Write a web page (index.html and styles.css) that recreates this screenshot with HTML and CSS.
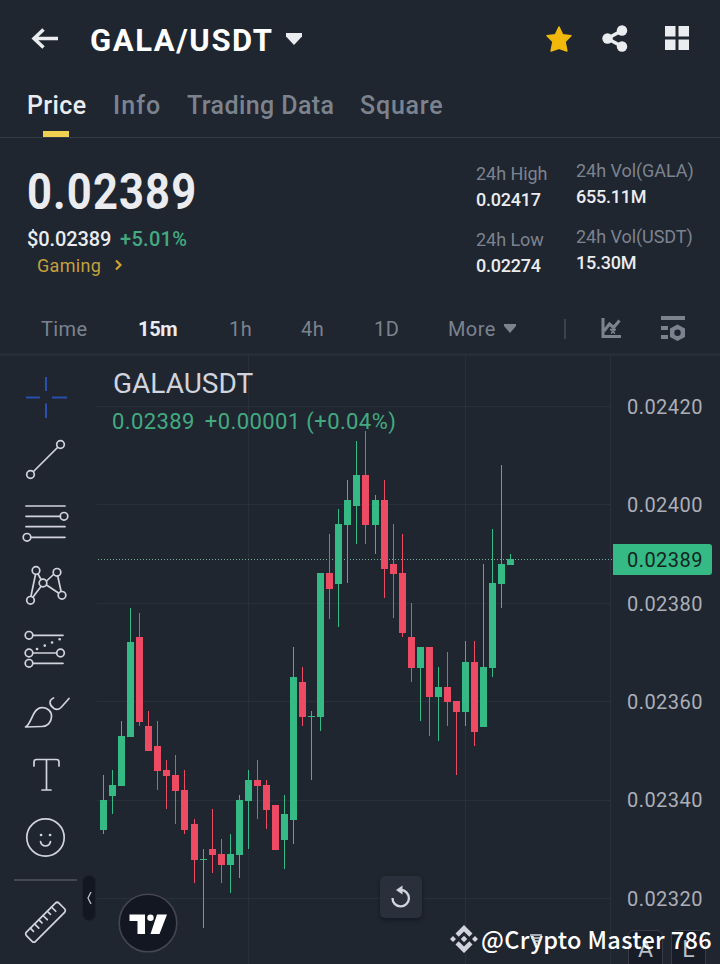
FILE: index.html
```html
<!DOCTYPE html>
<html lang="en">
<head>
<meta charset="utf-8">
<title>GALA/USDT</title>
<link rel="stylesheet" href="styles.css">
</head>
<body>
<div class="app">
  <header class="header">
    <svg class="back" width="30" height="24" viewBox="0 0 30 24"><path d="M28 11.500H4M13.500 2.500L4 11.500l9.500 9"/></svg>
    <h1 class="pair">GALA/USDT</h1>
    <svg class="caret" width="18" height="14" viewBox="0 0 18 14"><path d="M1 1h16v3.500L9 13 1 4.500z"/></svg>
    <div class="actions">
      <svg class="star" width="30" height="30" viewBox="0 0 30 30"><path d="M15 3l3.700 7.700 8.300 1.100-6 5.800 1.900 9.400L15 24.200 7.100 27 9 17.600 3 11.800l8.300-1.100z"/></svg>
      <svg class="share" width="30" height="30" viewBox="0 0 30 30"><path d="M22 6.500L7.500 14.500 22 22.500"/><circle cx="22" cy="6.500" r="5.200"/><circle cx="7.500" cy="14.500" r="5.200"/><circle cx="22" cy="22.500" r="5.200"/></svg>
      <svg class="grid-icon" width="24" height="24" viewBox="0 0 24 24"><path d="M0 0h10.500v10.500H0zM13.500 0H24v10.500H13.500zM0 13.500h10.500V24H0zM13.500 13.500H24V24H13.500z"/></svg>
    </div>
  </header>

  <nav class="tabs">
    <span class="tab tab-price active">Price</span>
    <span class="tab tab-info">Info</span>
    <span class="tab tab-data">Trading Data</span>
    <span class="tab tab-square">Square</span>
  </nav>

  <section class="summary">
    <div class="quote">
      <div class="last"><span>0.02389</span></div>
      <div class="fiat"><span class="usd">$0.02389</span><span class="change">+5.01%</span></div>
      <div class="tag">Gaming <svg width="9" height="12" viewBox="0 0 9 12"><path d="M2 1.500L6.500 6 2 10.500"/></svg></div>
    </div>
    <div class="stats stats-price">
      <div class="label">24h High</div><div class="value">0.02417</div>
      <div class="label">24h Low</div><div class="value">0.02274</div>
    </div>
    <div class="stats stats-volume">
      <div class="label">24h Vol(GALA)</div><div class="value">655.11M</div>
      <div class="label">24h Vol(USDT)</div><div class="value">15.30M</div>
    </div>
  </section>

  <nav class="intervals">
    <span>Time</span><span class="active">15m</span><span>1h</span><span>4h</span><span>1D</span>
    <span class="more">More<svg width="12" height="9" viewBox="0 0 12 9"><path d="M0 0h12v2L6 9 0 2z"/></svg></span>
    <i class="separator"></i>
    <svg class="indicator" width="22" height="22" viewBox="0 0 22 22"><path d="M2 1v18.500h18M3 14l5.500-7 4 3.500 6-7"/><path class="thin" d="M9 12.500h6M10 13l4 3.500M14 13l-4 3.500"/></svg>
    <svg class="settings" width="26" height="27" viewBox="0 0 26 27"><path d="M1 1h24v4H1zM1 11h7v4H1zM1 20h7v4H1z"/><path fill-rule="evenodd" d="M17.500 9.500l7.500 4v8.500l-7.500 4-7.500-4v-8.500zM17.500 14.500a3.200 3.200 0 1 0 0 6.400 3.200 3.200 0 0 0 0-6.400z"/></svg>
  </nav>

  <main class="chart">
    <aside class="tools">
      <svg class="tool cross" viewBox="0 0 60 63"><path d="M31 11v14M31 37.500v14.500M11 31.500h14M37 31.500h15"/></svg>
      <svg class="tool" viewBox="0 0 60 63"><path d="M18.500 42.500l24-24"/><circle cx="45.500" cy="15.500" r="3.800"/><circle cx="15.500" cy="45.500" r="3.800"/></svg>
      <svg class="tool" viewBox="0 0 60 63"><path d="M11 14h39M11 24.300h34.500M11 34.700h39M16 45.300h34"/><circle cx="49" cy="24.300" r="3.800"/><circle cx="12" cy="45.300" r="3.800"/></svg>
      <svg class="tool" viewBox="0 0 60 63"><path d="M20.500 19.500L16 41M23 19l3 5.500M31.500 26l7-6.500M42.700 21L46 36M43.500 38L31.500 30M26 31.500L18 42"/><circle cx="21" cy="15.500" r="3.800"/><circle cx="42" cy="17.300" r="3.800"/><circle cx="28" cy="28" r="3.800"/><circle cx="15.500" cy="45.300" r="3.800"/><circle cx="47" cy="40.300" r="3.800"/></svg>
      <svg class="tool" viewBox="0 0 60 63"><path d="M18 17.300h30M18 35h23.500M18 45.300h30"/><circle cx="14" cy="17.300" r="3.800"/><circle cx="14" cy="35" r="3.800"/><circle cx="45.500" cy="35" r="3.800"/><circle cx="14" cy="45.300" r="3.800"/><path class="dots" d="M22 31h.1M29.700 27.600h.1M37 24.500h.1M44.600 21.200h.1"/></svg>
      <svg class="tool" viewBox="0 0 60 63"><path d="M10.500 46C17 43 17 27 27 26.500 33 26.500 37 31 36.500 36 36.300 41.500 32 45.500 27 45.500zM38.500 17C33.500 19.500 34 24 39 27.500 42 29.500 44.500 28 46 26.500L54 17.500"/></svg>
      <svg class="tool" viewBox="0 0 60 63"><path d="M19 22v-4q0-2.500 2.500-2.500h20q2.500 0 2.500 2.500v4M31.500 15.500v30.500M27 46h9"/></svg>
      <svg class="tool" viewBox="0 0 60 63"><circle cx="30.500" cy="30.500" r="18.700"/><path d="M25.500 34.500q1 4.500 5 4.500t5-4.500"/><path class="dots" d="M26 28h.1M35 28h.1"/></svg>
      <i class="divider"></i>
      <svg class="tool" viewBox="0 0 60 63"><g transform="translate(30.500 32.200) rotate(-45)"><rect x="-23" y="-6.500" width="46" height="13" rx="2.500"/><path d="M-15-6.500v4.500M-9-6.500v6M-3-6.500v4.500M3-6.500v6M9-6.500v4.500M15-6.500v6"/></g></svg>
    </aside>

    <div class="plot">
      <svg class="candles" width="516" height="608" viewBox="97 356 516 608">
        <path class="gridline" d="M97 406.500H611M97 504.500H611M97 603.500H611M97 701.500H611M97 800.500H611M97 898.500H611M248.500 356V964M465.500 356V964M610.500 356V964"/>
        <path class="price-line" d="M98 559.500H613"/>
        <path id="up" class="up"/>
        <path id="down" class="down"/>
      </svg>
      <div class="legend">
        <div class="symbol">GALAUSDT</div>
        <div class="ohlc"><span>0.02389</span><span>+0.00001 (+0.04%)</span></div>
      </div>
    </div>

    <div class="axis">
      <span>0.02420</span><span>0.02400</span><span>0.02380</span><span>0.02360</span><span>0.02340</span><span>0.02320</span>
      <b class="price-tag">0.02389</b>
    </div>

    <div class="collapse"><svg width="7" height="14" viewBox="0 0 7 14"><path d="M5 1L2 7l3 6"/></svg></div>
    <svg class="brand" width="60" height="60" viewBox="118 893 60 60"><circle cx="148" cy="923" r="28.800"/><path d="M129.500 914.500H145V934h-7.500v-13h-8zM157 914.500h10L159.500 934h-9z"/><circle class="dot" cx="150.500" cy="917.800" r="3.200"/></svg>
    <button class="reset" aria-label="Reset chart"><svg width="24" height="24" viewBox="0 0 24 24"><path class="arc" d="M3.500 13a8.200 8.200 0 1 0 8.500-8"/><path class="head" d="M7 5l6.500-4.500v9z"/></svg></button>
    <div class="scale-keys"><span>A</span><span>L</span></div>
    <div class="watermark">
      <svg width="28" height="28" viewBox="0 0 28 28"><path d="M14 0l8.500 8.500-3.200 3.200L14 6.400l-5.300 5.300-3.200-3.200zM14 28l8.500-8.500-3.200-3.200L14 21.600l-5.300-5.300-3.200 3.200zM3 11l3 3-3 3-3-3zM25 11l3 3-3 3-3-3zM14 10.800l3.200 3.200-3.200 3.200-3.200-3.200z"/></svg>
      <span>@Crypto Master 786</span>
      <svg class="filter" width="13" height="13" viewBox="0 0 13 13"><path d="M0 1h12M1 4h10M3 7h6M4.500 10h3"/></svg>
    </div>
  </main>
</div>
<script src="chart.js"></script>
</body>
</html>
```
FILE: chart.js
```js
// Each candle: left edge, wick top, body top, body bottom, wick bottom, direction.
const candles = [
  [100,775,800,830,834,1],[109,770,785,796,814,1],[118,721,736,786,786,1],[127,608,642,737,737,1],
  [136,613,637,722,726,0],[145,711,726,751,751,0],[154,721,746,771,790,0],[163,760,770,776,809,0],
  [172,755,775,791,824,0],[181,770,790,830,834,0],[191,819,824,860,883,0],[200,849,859,860,928,1],
  [209,809,849,855,873,0],[218,839,854,865,883,0],[227,834,854,865,893,1],[236,795,800,855,878,1],
  [245,770,780,801,849,1],[254,760,780,786,819,0],[263,780,785,810,829,0],[272,805,805,850,850,0],
  [281,795,814,840,869,1],[290,647,677,820,844,1],[299,667,682,717,726,0],[308,711,716,717,780,1],
  [317,573,573,717,731,1],[326,534,573,589,619,0],[335,509,524,584,627,1],[344,480,500,525,583,1],
  [353,441,475,506,544,1],[362,431,475,525,544,0],[372,495,500,525,554,1],[381,480,500,569,598,0],
  [390,524,564,574,618,0],[399,534,573,633,637,0],[408,603,637,668,682,0],[417,647,647,668,721,1],
  [426,647,647,697,736,0],[435,667,687,697,741,1],[444,652,687,702,726,0],[453,701,701,712,775,0],
  [462,641,662,712,726,1],[471,641,662,732,746,0],[480,564,667,727,727,1],[489,529,583,668,677,1],
  [498,465,564,584,608,1],[507,554,559,565,565,1]
];
const paths = ["", ""];
for (const [x, high, top, bottom, low, up] of candles) {
  paths[up] += `M${x} ${top}h7v${bottom - top}h-7z`;
  if (top > high) paths[up] += `M${x + 3} ${high}h1v${top - high}h-1z`;
  if (low > bottom) paths[up] += `M${x + 3} ${bottom}h1v${low - bottom}h-1z`;
}
document.getElementById("down").setAttribute("d", paths[0]);
document.getElementById("up").setAttribute("d", paths[1]);
```
FILE: styles.css
```css
* { box-sizing: border-box; }
body { margin: 0; background: #1f2630; color: #eaecef; font-family: Roboto, "Liberation Sans", sans-serif; }
svg { display: block; flex: none; fill: none; }
.app { width: 720px; height: 964px; overflow: hidden; display: flex; flex-direction: column; }

.header { height: 78px; padding: 0 31px 0 30px; display: flex; align-items: center; }
.back path { stroke: #eaecef; stroke-width: 3.5; }
.pair { margin: 3px 0 0 30px; width: 183px; font-size: 31px; line-height: 40px; font-weight: 700; letter-spacing: 1.6px; color: #fff; white-space: nowrap; }
.caret { margin-left: 12px; fill: #eaecef; }
.actions { margin-left: auto; display: flex; align-items: center; }
.star { fill: #f0b90b; stroke: #f0b90b; stroke-width: 1.5; stroke-linejoin: round; margin-right: 26px; }
.share { fill: #eaecef; margin-right: 35px; }
.share path { fill: none; stroke: #eaecef; stroke-width: 3.5; }
.grid-icon { fill: #eaecef; margin-bottom: 2px; }

.tabs { height: 60px; padding-left: 27px; border-bottom: 1px solid #343b45; display: flex; flex: none; }
.tab { position: relative; height: 59px; line-height: 56px; font-size: 25px; font-weight: 500; color: #7c838e; white-space: nowrap; letter-spacing: .4px; }
.tab.active { color: #eaecef; }
.tab.active::after { content: ""; position: absolute; left: 16px; bottom: 0; width: 26px; height: 6px; background: #f0d050; }
.tab-price { width: 86px; }
.tab-info { width: 74px; letter-spacing: 1.1px; }
.tab-data { width: 173px; }
.tab-square { letter-spacing: .8px; }

.summary { height: 162px; display: flex; flex: none; padding: 0 0 0 27px; white-space: nowrap; }
.quote { width: 449px; padding-top: 25px; }
.last { height: 62px; font-size: 50px; line-height: 58px; font-weight: 700; letter-spacing: 1.3px; }
.last span { display: inline-block; transform: scaleX(.87); transform-origin: 0 50%; }
.fiat { height: 27px; font-size: 20px; line-height: 28px; font-weight: 500; display: flex; }
.usd { width: 93px; letter-spacing: -.1px; }
.change { color: #43aa80; letter-spacing: .3px; }
.tag { display: flex; align-items: center; gap: 13px; padding-left: 10px; height: 26px; font-size: 18px; letter-spacing: .3px; color: #c5a03e; }
.tag path { stroke: #d0a030; stroke-width: 2.2; }
.stats { width: 100px; padding-top: 23px; }
.stats-volume { padding-top: 20px; width: 130px; }
.label { height: 25px; line-height: 26px; font-size: 18px; color: #7c838e; letter-spacing: -.05px; }
.value { height: 27px; line-height: 27px; font-size: 18px; font-weight: 500; margin-bottom: 14px; letter-spacing: -.25px; }

.intervals { height: 53px; display: grid; grid-template-columns: 97px 91px 72px 73px 74px 116px 37px 59px 1fr; align-items: center; padding-left: 41px; padding-top: 4px; font-size: 20px; color: #7c838e; flex: none; letter-spacing: .4px; }
.intervals .active { color: #eaecef; font-weight: 700; letter-spacing: -.3px; }
.more { display: flex; align-items: center; gap: 8px; }
.more svg, .settings { fill: #7c838e; }
.separator { width: 2px; height: 20px; background: #3b424d; }
.indicator { margin-bottom: 2px; }
.indicator path { stroke: #7c838e; stroke-width: 3; }
.indicator .thin { stroke-width: 1.5; }

.chart { position: relative; height: 611px; border-top: 3px solid #272d38; display: grid; grid-template-columns: 97px 516px 107px; }
.tools { padding: 10px 0 0 15px; }
.tool { width: 60px; height: 63px; stroke: #d1d4dc; stroke-width: 1.7; stroke-linecap: round; stroke-linejoin: round; }
.cross { stroke: #2b4fae; stroke-width: 2; stroke-linecap: butt; }
.tool .dots { stroke-width: 2.6; }
.divider { display: block; width: 63px; height: 2px; margin: 9px 0 9px -1px; background: #434851; }
.plot { display: grid; }
.plot > * { grid-area: 1 / 1; }
.gridline { stroke: #29303a; }
.price-line { stroke: #72b398; stroke-dasharray: 1 2; }
.up { fill: #35b985; }
.down { fill: #ed4b63; }
.legend { padding: 10px 0 0 16px; white-space: nowrap; }
.symbol { height: 37px; line-height: 36px; font-size: 28px; color: #d1d4dc; }
.ohlc { display: flex; gap: 10px; height: 38px; margin-left: -1px; line-height: 38px; font-size: 22px; color: #43aa80; letter-spacing: .4px; }
.axis { position: relative; padding-top: 2px; letter-spacing: .45px; }
.axis > span { display: flex; align-items: center; height: 98.3px; padding-left: 14px; font-size: 20px; color: #abafb8; }
.price-tag { position: absolute; top: 188px; left: 0; width: 99px; height: 31px; padding-left: 14px; line-height: 32px; border-radius: 0 3px 3px 0; background: #35b985; color: #14251f; font-size: 20px; font-weight: 400; }

.collapse { position: absolute; left: 82px; top: 519px; width: 14px; height: 46px; border-radius: 7px; background: #131722; border: 1px solid #1b202b; display: grid; place-items: center; }
.collapse path { stroke: #c0c3cb; stroke-width: 1.3; }
.brand { position: absolute; left: 118px; top: 537px; fill: #fff; }
.brand circle { fill: #131722; stroke: #434651; stroke-width: 1.6; }
.brand .dot { fill: #fff; stroke: none; }
.reset { position: absolute; left: 380px; top: 520px; width: 42px; height: 42px; padding: 9px; border: 0; border-radius: 5px; background: #2a303b; box-shadow: 0 2px 4px #151a22; }
.arc { stroke: #d1d4dc; stroke-width: 2.3; }
.head { fill: #d1d4dc; }
.scale-keys { position: absolute; left: 628px; top: 574px; height: 34px; overflow: hidden; display: flex; gap: 8px; }
.scale-keys span { width: 35px; height: 40px; border: 1px solid #363c47; border-radius: 6px; background: #171c26; color: #b9bdc6; font-size: 23px; line-height: 37px; text-align: center; }
.watermark { position: absolute; left: 450px; top: 565px; display: flex; align-items: center; gap: 3px; height: 36px; font: 500 23.5px/36px "Noto Sans CJK SC", sans-serif; letter-spacing: .33px; color: #fff; white-space: nowrap; }
.watermark svg { fill: #d1d4dc; }
.watermark .filter { position: absolute; left: 80px; top: 13px; stroke: #d1d4dc; stroke-width: 1.6; }
```
